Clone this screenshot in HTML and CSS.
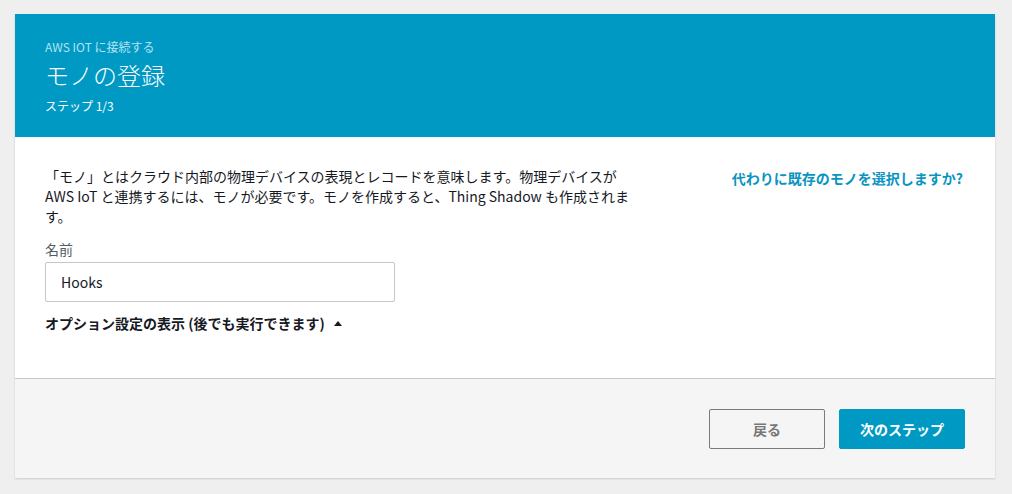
FILE: index.html
```html
<!DOCTYPE html>
<html lang="ja">
<head>
<meta charset="utf-8">
<link rel="stylesheet" href="styles.css">
</head>
<body>
<div class="card">
  <header class="hdr">
    <div class="crumb">AWS IOT に接続する</div>
    <h1 class="title">モノの登録</h1>
    <div class="step">ステップ 1/3</div>
  </header>
  <section class="body">
    <div class="main">
      <p class="desc">「モノ」とはクラウド内部の物理デバイスの表現とレコードを意味します。物理デバイスが AWS IoT と連携するには、モノが必要です。モノを作成すると、Thing Shadow も作成されます。</p>
      <label class="lbl">名前</label>
      <div class="input">Hooks</div>
      <div class="opts">オプション設定の表示 (後でも実行できます) <span class="tri"></span></div>
    </div>
    <a class="alt">代わりに既存のモノを選択しますか?</a>
  </section>
  <footer class="foot">
    <button class="btn back">戻る</button>
    <button class="btn next">次のステップ</button>
  </footer>
</div>
</body>
</html>
```
FILE: styles.css
```css
* { box-sizing: border-box; }
html, body { margin: 0; padding: 0; }
body {
  background: #efefef;
  font-family: "Noto Sans CJK JP", "Noto Sans", sans-serif;
  color: #16191f;
  padding: 14px 17px 16px 15px;
}
.card {
  background: #fff;
  box-shadow: 0 1px 2px rgba(0,0,0,0.15);
}
.hdr {
  background: #0099c4;
  height: 123px;
  padding: 24px 30px 0;
  color: #fff;
}
.crumb {
  font-size: 12px;
  line-height: 18px;
  color: #b5e2f1;
}
.title {
  margin: 2px 0 0;
  font-size: 24px;
  font-weight: 300;
  line-height: 34px;
}
.step {
  margin-top: 5px;
  font-size: 12px;
  line-height: 18px;
}
.body {
  height: 242px;
  display: flex;
  justify-content: space-between;
  padding: 29px 32px 0 30px;
  border-bottom: 1px solid #c6c6c6;
}
.main { width: 592px; }
.desc {
  margin: 0;
  font-size: 14px;
  line-height: 20px;
  color: #16191f;
}
.lbl {
  display: block;
  margin-top: 13px;
  font-size: 14px;
  line-height: 20px;
  color: #545b64;
}
.input {
  margin-top: 3px;
  width: 350px;
  height: 40px;
  border: 1px solid #c6c6c6;
  border-radius: 2px;
  padding: 0 15px;
  font-size: 14px;
  line-height: 38px;
  color: #16191f;
}
.opts {
  margin-top: 11px;
  font-size: 14px;
  line-height: 20px;
  font-weight: 700;
  color: #16191f;
  display: flex;
  align-items: center;
}
.tri {
  display: inline-block;
  margin-left: 9px;
  width: 0; height: 0;
  border-left: 4px solid transparent;
  border-right: 4px solid transparent;
  border-bottom: 5px solid #16191f;
}
.alt {
  margin-top: 2px;
  font-size: 14px;
  line-height: 20px;
  font-weight: 700;
  color: #0a94c2;
  white-space: nowrap;
}
.foot {
  background: #f5f5f5;
  height: 99px;
  display: flex;
  justify-content: flex-end;
  align-items: flex-start;
  padding: 30px 30px 0;
  gap: 14px;
}
.btn {
  height: 40px;
  border-radius: 2px;
  font-family: inherit;
  font-size: 14px;
  font-weight: 700;
  cursor: pointer;
}
.back {
  width: 116px;
  background: #f5f5f5;
  border: 1px solid #7a7a7a;
  color: #777;
}
.next {
  width: 126px;
  background: #0099c4;
  border: 1px solid #0099c4;
  color: #fff;
}
```
